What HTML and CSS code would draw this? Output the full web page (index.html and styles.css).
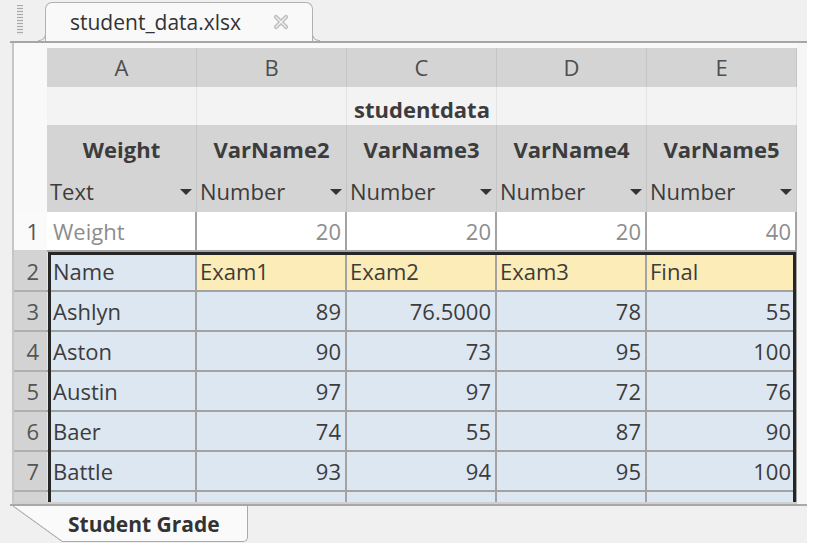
FILE: index.html
```html
<!DOCTYPE html>
<html>
<head>
<meta charset="utf-8">
<link rel="stylesheet" href="styles.css">
</head>
<body>
<div class="app">
  <div class="tabbar">
    <div class="grip"></div>
    <div class="doc-tab">
      <span class="doc-name">student_data.xlsx</span>
      <svg class="close" width="16" height="16" viewBox="0 0 16 16"><path d="M3 3 L13 13 M13 3 L3 13" stroke="#bdbdbd" stroke-width="4.2" stroke-linecap="round"/><path d="M3 3 L13 13 M13 3 L3 13" stroke="#f1f1f1" stroke-width="1.4" stroke-linecap="round"/></svg>
    </div>
  </div>
  <div class="frame">
    <div class="sheet">
      <div class="row letters">
        <div class="rh"></div>
        <div class="c">A</div><div class="c">B</div><div class="c">C</div><div class="c">D</div><div class="c">E</div>
      </div>
      <div class="row title">
        <div class="rh"></div>
        <div class="span">studentdata</div>
      </div>
      <div class="row varnames">
        <div class="rh"></div>
        <div class="c">Weight</div><div class="c">VarName2</div><div class="c">VarName3</div><div class="c">VarName4</div><div class="c">VarName5</div>
      </div>
      <div class="row types">
        <div class="rh"></div>
        <div class="c"><span>Text</span><i class="arrow"></i></div>
        <div class="c"><span>Number</span><i class="arrow"></i></div>
        <div class="c"><span>Number</span><i class="arrow"></i></div>
        <div class="c"><span>Number</span><i class="arrow"></i></div>
        <div class="c"><span>Number</span><i class="arrow"></i></div>
      </div>
      <div class="row r r1">
        <div class="rh">1</div>
        <div class="c w t">Weight</div><div class="c w n">20</div><div class="c w n">20</div><div class="c w n">20</div><div class="c w n">40</div>
      </div>
      <div class="row r">
        <div class="rh">2</div>
        <div class="c b t">Name</div><div class="c y">Exam1</div><div class="c y">Exam2</div><div class="c y">Exam3</div><div class="c y">Final</div>
      </div>
      <div class="row r">
        <div class="rh">3</div>
        <div class="c b t">Ashlyn</div><div class="c b n">89</div><div class="c b n">76.5000</div><div class="c b n">78</div><div class="c b n">55</div>
      </div>
      <div class="row r">
        <div class="rh">4</div>
        <div class="c b t">Aston</div><div class="c b n">90</div><div class="c b n">73</div><div class="c b n">95</div><div class="c b n">100</div>
      </div>
      <div class="row r">
        <div class="rh">5</div>
        <div class="c b t">Austin</div><div class="c b n">97</div><div class="c b n">97</div><div class="c b n">72</div><div class="c b n">76</div>
      </div>
      <div class="row r">
        <div class="rh">6</div>
        <div class="c b t">Baer</div><div class="c b n">74</div><div class="c b n">55</div><div class="c b n">87</div><div class="c b n">90</div>
      </div>
      <div class="row r">
        <div class="rh">7</div>
        <div class="c b t">Battle</div><div class="c b n">93</div><div class="c b n">94</div><div class="c b n">95</div><div class="c b n">100</div>
      </div>
      <div class="row r partial">
        <div class="rh"></div>
        <div class="c b"></div><div class="c b"></div><div class="c b"></div><div class="c b"></div><div class="c b"></div>
      </div>
      <div class="sel"></div>
    </div>
    <div class="vside"></div>
  </div>
  <div class="sheetbar">
    <div class="sheet-tab">Student Grade</div>
  </div>
</div>
</body>
</html>
```

FILE: styles.css
```css
* { box-sizing: border-box; }
body {
  margin: 0;
  background: #ffffff;
  font-family: "Open Sans", "Noto Sans", sans-serif;
  color: #3c3c3c;
}
.app {
  width: 807px;
  height: 543px;
  background: #f0f0f0;
  display: flex;
  flex-direction: column;
}
.tabbar {
  height: 41px;
  flex: none;
  display: flex;
  align-items: flex-end;
}
.grip {
  align-self: flex-start;
  margin: 5px 0 0 17px;
  width: 6px;
  height: 30px;
  background: repeating-linear-gradient(to bottom, #a9a9a9 0 1px, #e9e9e9 1px 3px);
}
.doc-tab {
  position: relative;
  margin-left: 22px;
  width: 268px;
  height: 39px;
  background: #f9f9f9;
  border: 1px solid #b1b1b1;
  border-bottom: none;
  border-radius: 7px 7px 0 0;
  display: flex;
  align-items: center;
  padding-left: 24px;
  font-size: 21px;
  color: #333;
}
.doc-tab::before, .doc-tab::after {
  content: "";
  position: absolute;
  bottom: 0;
  width: 7px;
  height: 7px;
  border-bottom: 1px solid #b1b1b1;
}
.doc-tab::before {
  left: -8px;
  border-right: 1px solid #b1b1b1;
  border-bottom-right-radius: 7px;
}
.doc-tab::after {
  right: -8px;
  border-left: 1px solid #b1b1b1;
  border-bottom-left-radius: 7px;
}
.close { margin-left: 32px; }

.frame {
  flex: none;
  margin-left: 10px;
  height: 465px;
  border-top: 2px solid #a6a6a6;
  border-bottom: 2px solid #a8a8a8;
  display: flex;
}
.sheet {
  position: relative;
  overflow: hidden;
  margin-left: 2px;
  width: 785px;
  border-left: 2px solid #c6c6c6;
  border-bottom: 2px solid #d0d0d0;
  background: #f9f9f9;
  padding-top: 5px;
  font-size: 22px;
}
.vside { flex: 1; background: #f6f6f6; }

.row { display: flex; }
.rh { width: 33px; flex: none; }
.c { width: 150px; flex: none; white-space: nowrap; overflow: hidden; }

.letters { height: 39px; }
.letters .c {
  background: #d4d4d4;
  border-right: 1px solid #c5c5c5;
  text-align: center;
  line-height: 39px;
  color: #4e4e4e;
}
.title { height: 38px; }
.title .span {
  width: 750px;
  background: #f3f3f3 repeating-linear-gradient(to right, transparent 0 149px, #e3e3e3 149px 150px);
  text-align: center;
  font-weight: bold;
  line-height: 38px;
  padding-top: 3px;
  font-size: 22px;
}
.varnames { height: 45px; }
.varnames .c {
  background: #d4d4d4;
  border-right: 1px solid #c5c5c5;
  font-weight: bold;
  text-align: center;
  line-height: 45px;
  padding-top: 2px;
}
.types { height: 42px; }
.types .c {
  background: #d4d4d4;
  border-right: 1px solid #c5c5c5;
  display: flex;
  align-items: center;
  justify-content: space-between;
  padding: 0 4px 0 3px;
}
.arrow {
  width: 0;
  height: 0;
  border-left: 6px solid transparent;
  border-right: 6px solid transparent;
  border-top: 6px solid #333;
  margin-top: 2px;
}

.r { height: 40px; }
.r .c {
  border-right: 2px solid #a3a3a3;
  border-bottom: 2px solid #a3a3a3;
  line-height: 38px;
  padding: 0 4px 0 3px;
}
.r .c.t { padding-left: 6px; }
.r .c.n { text-align: right; }
.r .rh {
  background: #d3d3d3;
  border-bottom: 2px solid #b0b0b0;
  text-align: right;
  padding-right: 8px;
  line-height: 38px;
  color: #555;
}
.r1 .rh { background: #fafafa; border-bottom-color: #d3d3d3; }
.r1 .c { color: #8d8d8d; }
.w { background: #ffffff; }
.b { background: #dde7f2; }
.y { background: #fcecb8; }
.partial { height: 12px; }

.sel {
  position: absolute;
  left: 34px;
  top: 209px;
  width: 748px;
  height: 270px;
  border: 3px solid #262626;
  border-bottom: none;
}

.sheetbar { flex: 1; }
.sheet-tab {
  position: relative;
  margin-left: 13px;
  width: 235px;
  height: 36px;
  background: #fafafa;
  border-right: 1px solid #a9a9a9;
  border-bottom: 1px solid #a9a9a9;
  border-bottom-right-radius: 5px;
  padding-left: 55px;
  font-size: 21px;
  font-weight: bold;
  line-height: 36px;
  color: #333;
}
.sheet-tab::before {
  content: "";
  position: absolute;
  left: 0;
  top: 0;
  bottom: -1px;
  width: 50px;
  background: linear-gradient(to top right, #f0f0f0 calc(50% - 1px), #a9a9a9 50%, #fafafa calc(50% + 1px));
}
```
